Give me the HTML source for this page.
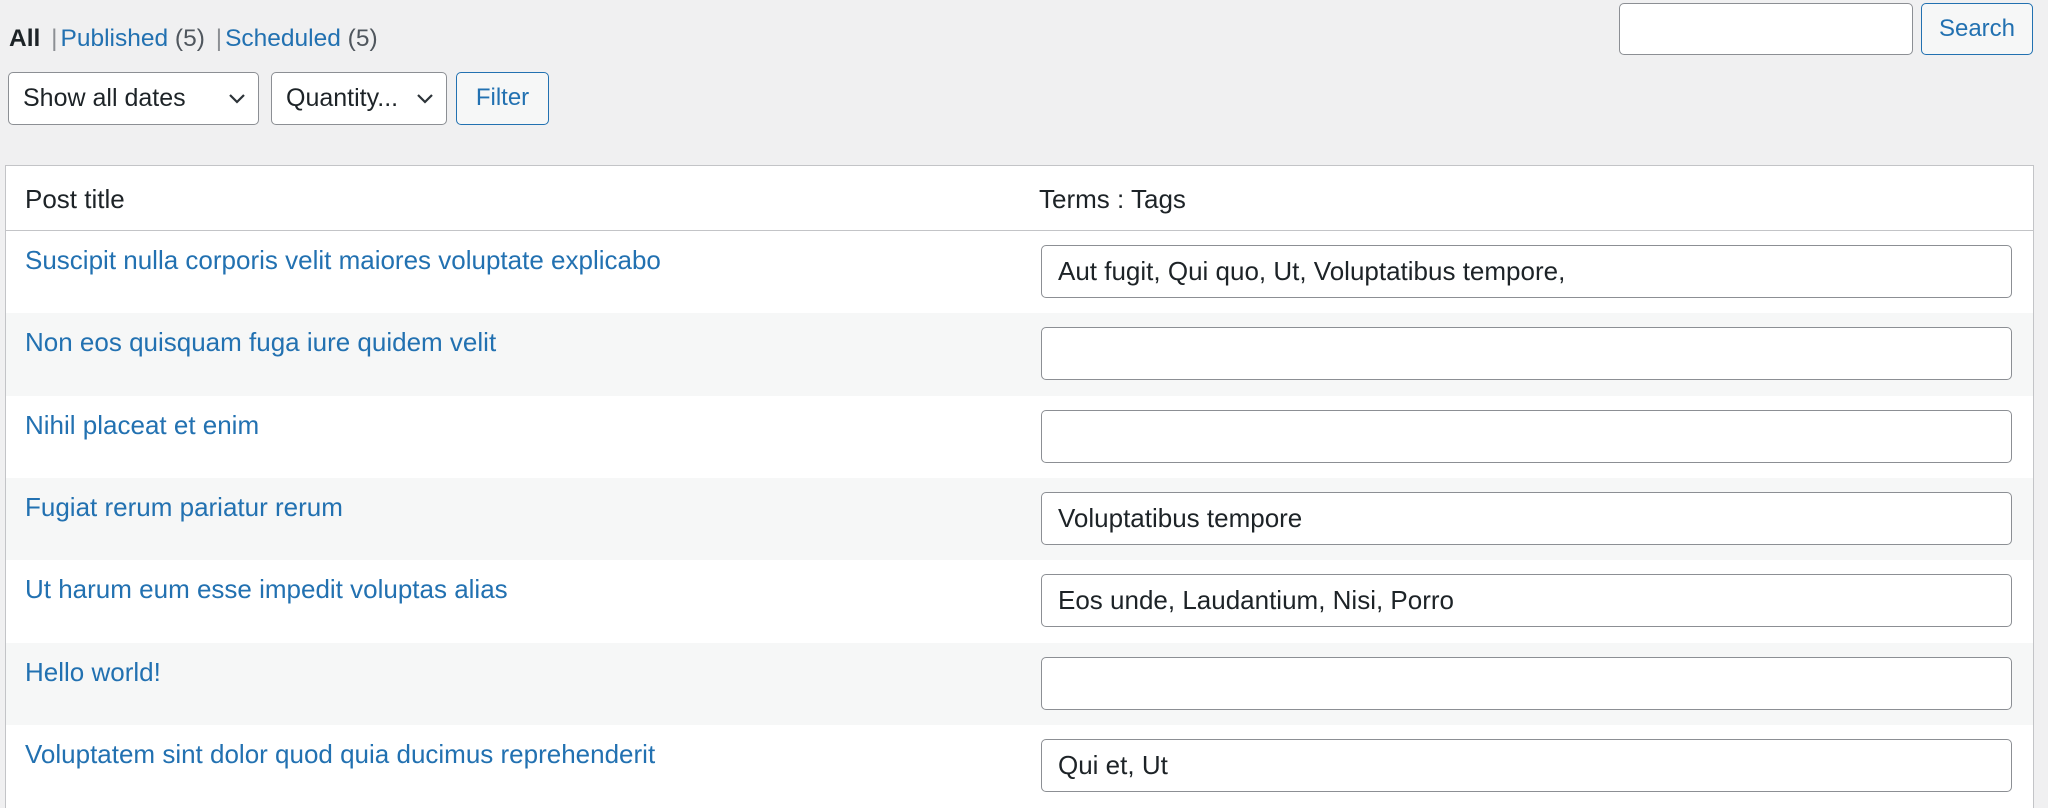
<!DOCTYPE html>
<html><head><meta charset="utf-8"><style>
*{box-sizing:border-box;margin:0;padding:0}
html,body{width:2048px;height:808px;overflow:hidden}
body{background:#f0f0f1;font-family:"Liberation Sans",Arial,sans-serif;color:#1d2327;position:relative;font-size:25.5px}
.abs{position:absolute}
a{color:#2271b1;text-decoration:none}
.sel{position:absolute;background:#fff;border:1.5px solid #8c8f94;border-radius:5px;height:53px;line-height:50px;padding-left:14px;font-size:25px}
.sel svg{position:absolute;top:16px}
.btn{position:absolute;background:#f6f7f7;border:1.5px solid #2271b1;border-radius:5px;color:#2271b1;text-align:center;font-size:24px}
.table{position:absolute;left:5px;top:165px;width:2029px;height:643px;background:#fff;border:1.5px solid #c3c4c7;border-bottom:none;overflow:hidden}
.row{position:absolute;left:0;width:100%;height:82.3px}
.row.alt{background:#f6f7f7}
.row a{position:absolute;left:19px;top:14px;font-size:26px}
.inp{position:absolute;left:1035px;top:14px;width:971px;height:53px;background:#fff;border:1.5px solid #8c8f94;border-radius:5px;padding-left:16px;line-height:50px;font-size:26px}
.pipe{color:#8c8f94;margin:0 3px 0 4px}
</style></head><body>
<div class="abs" style="left:9px;top:25px;font-size:24.5px;"><b>All</b> <span class="pipe">|</span><a>Published</a> <span style="color:#50575e">(5)</span> <span class="pipe">|</span><a>Scheduled</a> <span style="color:#50575e">(5)</span></div>
<div class="abs" style="left:1619px;top:3px;width:294px;height:52px;background:#fff;border:1.5px solid #8c8f94;border-radius:5px"></div>
<div class="btn" style="left:1921px;top:3px;width:112px;height:52px;line-height:49px">Search</div>
<div class="sel" style="left:8px;top:72px;width:251px">Show all dates<svg style="left:218px" width="20" height="20" viewBox="0 0 20 20"><path d="M3 6l7 7 7-7" fill="none" stroke="#2c3338" stroke-width="2.2"/></svg></div>
<div class="sel" style="left:271px;top:72px;width:176px">Quantity...<svg style="left:143px" width="20" height="20" viewBox="0 0 20 20"><path d="M3 6l7 7 7-7" fill="none" stroke="#2c3338" stroke-width="2.2"/></svg></div>
<div class="btn" style="left:456px;top:72px;width:93px;height:53px;line-height:50px">Filter</div>
<div class="table">
<div class="abs" style="left:0;top:0;width:100%;height:65px;border-bottom:1.5px solid #c3c4c7"></div>
<div class="abs" style="left:19px;top:18px;font-size:26px">Post title</div>
<div class="abs" style="left:1033px;top:18px;font-size:26px">Terms : Tags</div>
<div class="row" style="top:65px"><a>Suscipit nulla corporis velit maiores voluptate explicabo</a><div class="inp">Aut fugit, Qui quo, Ut, Voluptatibus tempore,</div></div>
<div class="row alt" style="top:147.3px"><a>Non eos quisquam fuga iure quidem velit</a><div class="inp"></div></div>
<div class="row" style="top:229.6px"><a>Nihil placeat et enim</a><div class="inp"></div></div>
<div class="row alt" style="top:311.9px"><a>Fugiat rerum pariatur rerum</a><div class="inp">Voluptatibus tempore</div></div>
<div class="row" style="top:394.2px"><a>Ut harum eum esse impedit voluptas alias</a><div class="inp">Eos unde, Laudantium, Nisi, Porro</div></div>
<div class="row alt" style="top:476.5px"><a>Hello world!</a><div class="inp"></div></div>
<div class="row" style="top:558.8px"><a>Voluptatem sint dolor quod quia ducimus reprehenderit</a><div class="inp">Qui et, Ut</div></div>
</div>
</body></html>
